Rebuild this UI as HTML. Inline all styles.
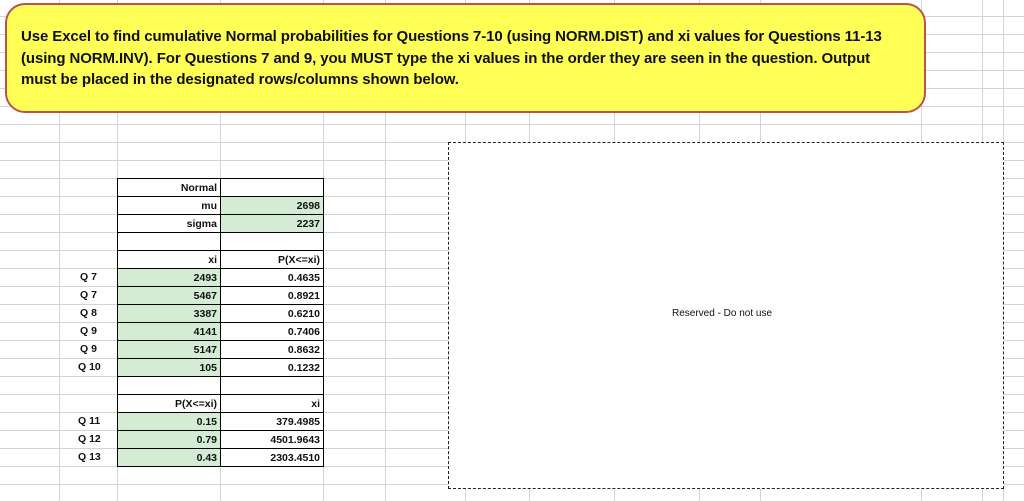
<!DOCTYPE html>
<html><head><style>
body{margin:0;width:1024px;height:501px;overflow:hidden;background:#fff;position:relative;font-family:"Liberation Sans",Arial,sans-serif;}
.grid{position:absolute;left:0;top:0;width:1024px;height:501px;
background-image:repeating-linear-gradient(to bottom,transparent 0,transparent 17px,#d4d4d4 17px,#d4d4d4 18px);background-position:0 -1px;}
.v{position:absolute;top:0;height:501px;width:1px;background:#d4d4d4;}
.call{position:absolute;left:5px;top:3px;width:917px;height:106px;background:#ffff55;border:2px solid #b85450;border-radius:20px;}
.call div{position:absolute;left:14px;font-weight:bold;font-size:15px;color:#111;white-space:nowrap;letter-spacing:-0.1px;}
.res{position:absolute;left:448px;top:142px;width:554px;height:345px;background:#fff;border:1px dashed #222;}
.res span{position:absolute;left:223px;top:165px;font-size:10px;color:#111;}
.t{position:absolute;left:117px;top:178px;width:207px;height:289px;background:#fff;}
.cell{position:absolute;box-sizing:border-box;border:1px solid #000;height:19px;font-size:10.5px;font-weight:bold;text-align:right;padding-right:3px;line-height:18px;color:#111;}
.g{background:#d3ecd3;}
.q{position:absolute;left:70px;width:36px;text-align:left;font-size:10.5px;font-weight:bold;line-height:19px;color:#111;}
</style></head><body>
<div class="grid"></div>
<div class="v" style="left:59px"></div><div class="v" style="left:117px"></div><div class="v" style="left:220px"></div><div class="v" style="left:323px"></div><div class="v" style="left:385px"></div><div class="v" style="left:465px"></div><div class="v" style="left:529px"></div><div class="v" style="left:614px"></div><div class="v" style="left:699px"></div><div class="v" style="left:760px"></div><div class="v" style="left:921px"></div><div class="v" style="left:982px"></div><div class="v" style="left:1003px"></div>
<div class="call">
<div style="top:23px">Use Excel to find cumulative Normal probabilities for Questions 7-10 (using NORM.DIST) and xi values for Questions 11-13</div>
<div style="top:45px">(using NORM.INV). For Questions 7 and 9, you MUST type the xi values in the order they are seen in the question. Output</div>
<div style="top:66px">must be placed in the designated rows/columns shown below.</div>
</div>
<div class="res"><span>Reserved - Do not use</span></div>
<div class="t"></div>
<div class="cell" style="left:117px;top:178px;width:104px">Normal</div><div class="cell" style="left:220px;top:178px;width:104px"></div>
<div class="cell" style="left:117px;top:196px;width:104px">mu</div><div class="cell g" style="left:220px;top:196px;width:104px">2698</div>
<div class="cell" style="left:117px;top:214px;width:104px">sigma</div><div class="cell g" style="left:220px;top:214px;width:104px">2237</div>
<div class="cell" style="left:117px;top:232px;width:104px"></div><div class="cell" style="left:220px;top:232px;width:104px"></div>
<div class="cell" style="left:117px;top:250px;width:104px">xi</div><div class="cell" style="left:220px;top:250px;width:104px">P(X&lt;=xi)</div>
<div class="cell g" style="left:117px;top:268px;width:104px">2493</div><div class="cell" style="left:220px;top:268px;width:104px">0.4635</div>
<div class="cell g" style="left:117px;top:286px;width:104px">5467</div><div class="cell" style="left:220px;top:286px;width:104px">0.8921</div>
<div class="cell g" style="left:117px;top:304px;width:104px">3387</div><div class="cell" style="left:220px;top:304px;width:104px">0.6210</div>
<div class="cell g" style="left:117px;top:322px;width:104px">4141</div><div class="cell" style="left:220px;top:322px;width:104px">0.7406</div>
<div class="cell g" style="left:117px;top:340px;width:104px">5147</div><div class="cell" style="left:220px;top:340px;width:104px">0.8632</div>
<div class="cell g" style="left:117px;top:358px;width:104px">105</div><div class="cell" style="left:220px;top:358px;width:104px">0.1232</div>
<div class="cell" style="left:117px;top:376px;width:104px"></div><div class="cell" style="left:220px;top:376px;width:104px"></div>
<div class="cell" style="left:117px;top:394px;width:104px">P(X&lt;=xi)</div><div class="cell" style="left:220px;top:394px;width:104px">xi</div>
<div class="cell g" style="left:117px;top:412px;width:104px">0.15</div><div class="cell" style="left:220px;top:412px;width:104px">379.4985</div>
<div class="cell g" style="left:117px;top:430px;width:104px">0.79</div><div class="cell" style="left:220px;top:430px;width:104px">4501.9643</div>
<div class="cell g" style="left:117px;top:448px;width:104px">0.43</div><div class="cell" style="left:220px;top:448px;width:104px">2303.4510</div>
<div class="q" style="top:268px;left:80px">Q 7</div>
<div class="q" style="top:286px;left:80px">Q 7</div>
<div class="q" style="top:304px;left:80px">Q 8</div>
<div class="q" style="top:322px;left:80px">Q 9</div>
<div class="q" style="top:340px;left:80px">Q 9</div>
<div class="q" style="top:358px;left:78px">Q 10</div>
<div class="q" style="top:412px;left:78px">Q 11</div>
<div class="q" style="top:430px;left:78px">Q 12</div>
<div class="q" style="top:448px;left:78px">Q 13</div>
</body></html>
